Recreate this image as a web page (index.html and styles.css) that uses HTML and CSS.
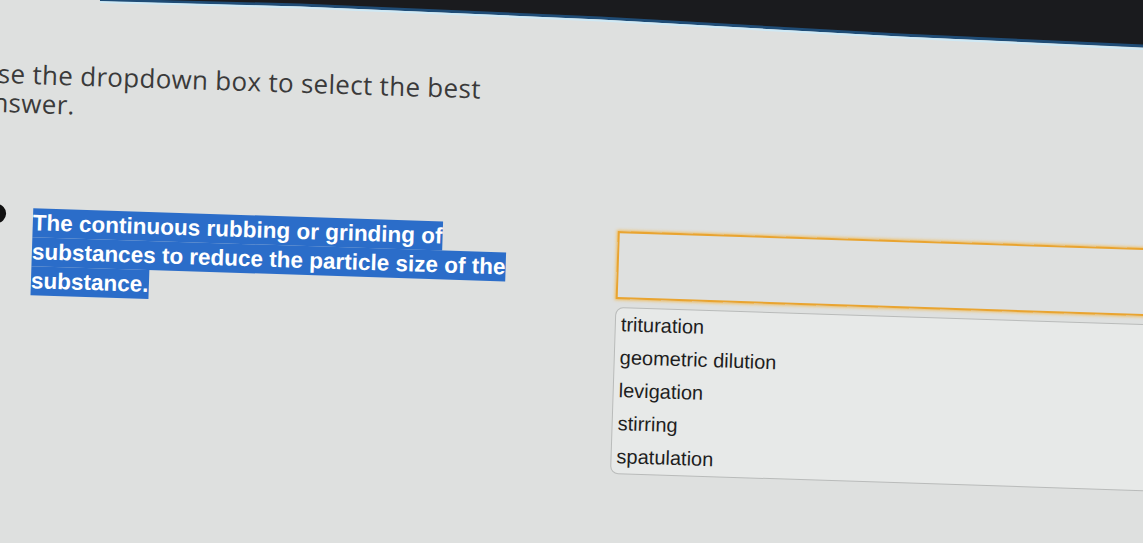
FILE: index.html
```html
<!DOCTYPE html>
<html lang="en">

<head>
    <meta charset="UTF-8">
    <meta name="viewport" content="width=device-width, initial-scale=1.0">
    <title>Matching Question</title>
    <link rel="stylesheet" href="styles.css">
</head>

<body>
    <!-- monitor bezel across the top edge -->
    <svg class="bezel" viewBox="0 0 1143 60" preserveAspectRatio="none">
        <path d="M0 0 L1143 0 L1143 46 L900 35 L600 18 L300 5 L100 0 Z" fill="#1a1b1e"/>
        <polyline points="100,0 300,5 600,18 900,35 1143,46" fill="none" stroke="#1f4c76" stroke-width="3"/>
        <polyline points="100,2 300,7.5 600,20.5 900,37.5 1143,49" fill="none" stroke="#cfe9f5" stroke-width="2"/>
    </svg>

    <div class="screen">
        <p class="directions">Use the dropdown box to select the best answer.</p>

        <div class="question-row">
            <div class="prompt">
                <span class="marker"></span>
                <p class="prompt-text"><span class="selected">The continuous rubbing or grinding of substances to reduce the particle size of the substance.</span></p>
            </div>

            <div class="answer">
                <div class="select-box"></div>
                <ul class="options">
                    <li>trituration</li>
                    <li>geometric dilution</li>
                    <li>levigation</li>
                    <li>stirring</li>
                    <li>spatulation</li>
                </ul>
            </div>
        </div>
    </div>
</body>

</html>
```

FILE: styles.css
```css
body {
    margin: 0;
    padding: 0;
    background-color: #dee0df;
    overflow: hidden;
    height: 543px;
    position: relative;
}

.bezel {
    position: absolute;
    top: 0;
    left: 0;
    width: 100%;
    height: 60px;
    z-index: 2;
}

.screen {
    width: 1300px;
    transform: rotate(1.85deg);
    transform-origin: 0 0;
}

.directions {
    margin: 0 0 0 -19px;
    padding-top: 59px;
    width: 580px;
    font-family: "Open Sans", sans-serif;
    font-size: 26px;
    line-height: 29px;
    letter-spacing: 0.3px;
    color: #3a3a3a;
}

.question-row {
    display: grid;
    grid-template-columns: 625px 1fr;
    margin-top: 90px;
}

.prompt {
    display: flex;
    align-items: flex-start;
}

.marker {
    width: 19px;
    height: 19px;
    border-radius: 50%;
    background-color: #111;
    margin: -3px 0 0 -6px;
    flex-shrink: 0;
}

.prompt-text {
    margin: 0 0 0 27px;
    width: 500px;
    font-family: "Liberation Sans", Arial, sans-serif;
    font-weight: bold;
    font-size: 22.5px;
    line-height: 29px;
}

.selected {
    background-color: #2b6dc9;
    color: #fff;
    padding: 2px 0;
}

.answer {
    padding-top: 4px;
}

.select-box {
    height: 64px;
    border: 2px solid #e9a430;
    box-shadow: 0 0 3px 1px rgba(246, 176, 50, 0.7);
}

.options {
    list-style: none;
    margin: 8px 0 0 0;
    padding: 0;
    background-color: #e7e9e8;
    border: 1px solid #b9bbba;
    border-radius: 8px;
}

.options li {
    height: 33px;
    line-height: 33px;
    padding-left: 5px;
    font-family: "Liberation Sans", Arial, sans-serif;
    font-size: 20px;
    color: #1e1e1e;
}
```
